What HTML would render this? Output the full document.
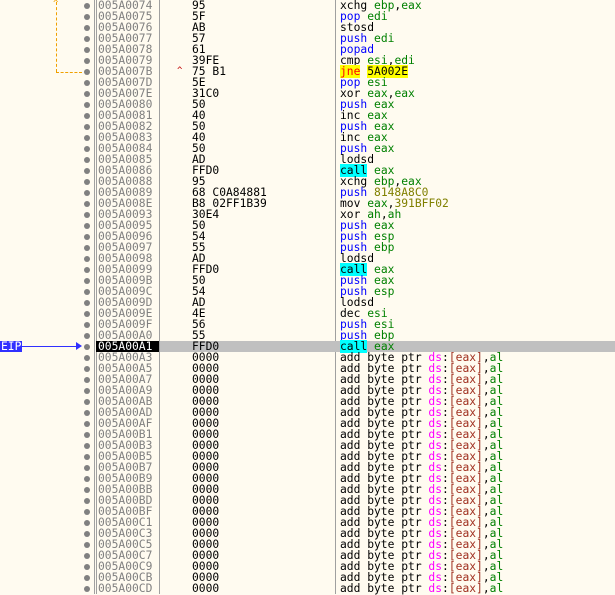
<!DOCTYPE html>
<html><head><style>
body{margin:0;width:615px;height:594px;overflow:hidden;background:#fffbf0;font-family:"DejaVu Sans Mono","Liberation Mono",monospace;font-size:11.3px;position:relative}
.r{position:relative;height:11px;line-height:11px;white-space:pre}
.r i{position:absolute;left:84px;top:3px;width:6px;height:6px;border-radius:50%;background:#808080}
.a{position:absolute;left:98px;color:#808080}
.b{position:absolute;left:192px;color:#000}
.d{position:absolute;left:340px;color:#000}
.p{color:#0000ff}.g{color:#008000}.o{color:#808000}.k{color:#ff00ff}.x{color:#a03020}
.c{background:#00ffff}
.e{background:#ffff00;color:#ff0000}.y{background:#ffff00}
.v{position:absolute;top:0;height:594px;width:1px;background:#a0a0a0}
</style></head><body>
<div class="v" style="left:94px"></div><div class="v" style="left:96px"></div><div class="v" style="left:159px"></div><div class="v" style="left:335px"></div>
<div style="position:absolute;left:56px;top:2px;height:70px;border-left:1px dashed #f0a000"></div>
<div style="position:absolute;left:56px;top:72px;width:26px;border-top:1px dashed #f0a000"></div>
<div style="position:absolute;left:53px;top:0;color:#f0a000;font-size:9px;line-height:8px">^</div>
<div class="r"><i></i><span class="a">005A0074</span><span class="b">95</span><span class="d">xchg <span class="g">ebp</span>,<span class="g">eax</span></span></div>
<div class="r"><i></i><span class="a">005A0075</span><span class="b">5F</span><span class="d"><span class="p">pop</span> <span class="g">edi</span></span></div>
<div class="r"><i></i><span class="a">005A0076</span><span class="b">AB</span><span class="d">stosd</span></div>
<div class="r"><i></i><span class="a">005A0077</span><span class="b">57</span><span class="d"><span class="p">push</span> <span class="g">edi</span></span></div>
<div class="r"><i></i><span class="a">005A0078</span><span class="b">61</span><span class="d"><span class="p">popad</span></span></div>
<div class="r"><i></i><span class="a">005A0079</span><span class="b">39FE</span><span class="d">cmp <span class="g">esi</span>,<span class="g">edi</span></span></div>
<div class="r"><i></i><span class="a">005A007B</span><span style="position:absolute;left:177px;color:#c00000;font-size:9px">^</span><span class="b">75 B1</span><span class="d"><span class="e">jne</span> <span class="y">5A002E</span></span></div>
<div class="r"><i></i><span class="a">005A007D</span><span class="b">5E</span><span class="d"><span class="p">pop</span> <span class="g">esi</span></span></div>
<div class="r"><i></i><span class="a">005A007E</span><span class="b">31C0</span><span class="d">xor <span class="g">eax</span>,<span class="g">eax</span></span></div>
<div class="r"><i></i><span class="a">005A0080</span><span class="b">50</span><span class="d"><span class="p">push</span> <span class="g">eax</span></span></div>
<div class="r"><i></i><span class="a">005A0081</span><span class="b">40</span><span class="d">inc <span class="g">eax</span></span></div>
<div class="r"><i></i><span class="a">005A0082</span><span class="b">50</span><span class="d"><span class="p">push</span> <span class="g">eax</span></span></div>
<div class="r"><i></i><span class="a">005A0083</span><span class="b">40</span><span class="d">inc <span class="g">eax</span></span></div>
<div class="r"><i></i><span class="a">005A0084</span><span class="b">50</span><span class="d"><span class="p">push</span> <span class="g">eax</span></span></div>
<div class="r"><i></i><span class="a">005A0085</span><span class="b">AD</span><span class="d">lodsd</span></div>
<div class="r"><i></i><span class="a">005A0086</span><span class="b">FFD0</span><span class="d"><span class="c">call</span> <span class="g">eax</span></span></div>
<div class="r"><i></i><span class="a">005A0088</span><span class="b">95</span><span class="d">xchg <span class="g">ebp</span>,<span class="g">eax</span></span></div>
<div class="r"><i></i><span class="a">005A0089</span><span class="b">68 C0A84881</span><span class="d"><span class="p">push</span> <span class="o">8148A8C0</span></span></div>
<div class="r"><i></i><span class="a">005A008E</span><span class="b">B8 02FF1B39</span><span class="d">mov <span class="g">eax</span>,<span class="o">391BFF02</span></span></div>
<div class="r"><i></i><span class="a">005A0093</span><span class="b">30E4</span><span class="d">xor <span class="g">ah</span>,<span class="g">ah</span></span></div>
<div class="r"><i></i><span class="a">005A0095</span><span class="b">50</span><span class="d"><span class="p">push</span> <span class="g">eax</span></span></div>
<div class="r"><i></i><span class="a">005A0096</span><span class="b">54</span><span class="d"><span class="p">push</span> <span class="g">esp</span></span></div>
<div class="r"><i></i><span class="a">005A0097</span><span class="b">55</span><span class="d"><span class="p">push</span> <span class="g">ebp</span></span></div>
<div class="r"><i></i><span class="a">005A0098</span><span class="b">AD</span><span class="d">lodsd</span></div>
<div class="r"><i></i><span class="a">005A0099</span><span class="b">FFD0</span><span class="d"><span class="c">call</span> <span class="g">eax</span></span></div>
<div class="r"><i></i><span class="a">005A009B</span><span class="b">50</span><span class="d"><span class="p">push</span> <span class="g">eax</span></span></div>
<div class="r"><i></i><span class="a">005A009C</span><span class="b">54</span><span class="d"><span class="p">push</span> <span class="g">esp</span></span></div>
<div class="r"><i></i><span class="a">005A009D</span><span class="b">AD</span><span class="d">lodsd</span></div>
<div class="r"><i></i><span class="a">005A009E</span><span class="b">4E</span><span class="d">dec <span class="g">esi</span></span></div>
<div class="r"><i></i><span class="a">005A009F</span><span class="b">56</span><span class="d"><span class="p">push</span> <span class="g">esi</span></span></div>
<div class="r"><i></i><span class="a">005A00A0</span><span class="b">55</span><span class="d"><span class="p">push</span> <span class="g">ebp</span></span></div>
<div class="r"><div style="position:absolute;left:160px;right:0;top:0;height:11px;background:#c0c0c0"></div><div style="position:absolute;left:0;top:0;height:11px;background:#3030ff;color:#fff;padding:0 1px">EIP</div><div style="position:absolute;left:22px;top:5px;width:58px;height:1px;background:#3030ff"></div><div style="position:absolute;left:76px;top:1px;width:0;height:0;border-left:6px solid #3030ff;border-top:4px solid transparent;border-bottom:4px solid transparent"></div><i></i><span class="a" style="background:#000;color:#fff;left:96px;padding-left:2px;width:61px">005A00A1</span><span class="b">FFD0</span><span class="d"><span class="c">call</span> <span class="g">eax</span></span></div>
<div class="r"><i></i><span class="a">005A00A3</span><span class="b">0000</span><span class="d">add byte ptr <span class="k">ds</span>:<span class="x">[eax]</span>,<span class="g">al</span></span></div>
<div class="r"><i></i><span class="a">005A00A5</span><span class="b">0000</span><span class="d">add byte ptr <span class="k">ds</span>:<span class="x">[eax]</span>,<span class="g">al</span></span></div>
<div class="r"><i></i><span class="a">005A00A7</span><span class="b">0000</span><span class="d">add byte ptr <span class="k">ds</span>:<span class="x">[eax]</span>,<span class="g">al</span></span></div>
<div class="r"><i></i><span class="a">005A00A9</span><span class="b">0000</span><span class="d">add byte ptr <span class="k">ds</span>:<span class="x">[eax]</span>,<span class="g">al</span></span></div>
<div class="r"><i></i><span class="a">005A00AB</span><span class="b">0000</span><span class="d">add byte ptr <span class="k">ds</span>:<span class="x">[eax]</span>,<span class="g">al</span></span></div>
<div class="r"><i></i><span class="a">005A00AD</span><span class="b">0000</span><span class="d">add byte ptr <span class="k">ds</span>:<span class="x">[eax]</span>,<span class="g">al</span></span></div>
<div class="r"><i></i><span class="a">005A00AF</span><span class="b">0000</span><span class="d">add byte ptr <span class="k">ds</span>:<span class="x">[eax]</span>,<span class="g">al</span></span></div>
<div class="r"><i></i><span class="a">005A00B1</span><span class="b">0000</span><span class="d">add byte ptr <span class="k">ds</span>:<span class="x">[eax]</span>,<span class="g">al</span></span></div>
<div class="r"><i></i><span class="a">005A00B3</span><span class="b">0000</span><span class="d">add byte ptr <span class="k">ds</span>:<span class="x">[eax]</span>,<span class="g">al</span></span></div>
<div class="r"><i></i><span class="a">005A00B5</span><span class="b">0000</span><span class="d">add byte ptr <span class="k">ds</span>:<span class="x">[eax]</span>,<span class="g">al</span></span></div>
<div class="r"><i></i><span class="a">005A00B7</span><span class="b">0000</span><span class="d">add byte ptr <span class="k">ds</span>:<span class="x">[eax]</span>,<span class="g">al</span></span></div>
<div class="r"><i></i><span class="a">005A00B9</span><span class="b">0000</span><span class="d">add byte ptr <span class="k">ds</span>:<span class="x">[eax]</span>,<span class="g">al</span></span></div>
<div class="r"><i></i><span class="a">005A00BB</span><span class="b">0000</span><span class="d">add byte ptr <span class="k">ds</span>:<span class="x">[eax]</span>,<span class="g">al</span></span></div>
<div class="r"><i></i><span class="a">005A00BD</span><span class="b">0000</span><span class="d">add byte ptr <span class="k">ds</span>:<span class="x">[eax]</span>,<span class="g">al</span></span></div>
<div class="r"><i></i><span class="a">005A00BF</span><span class="b">0000</span><span class="d">add byte ptr <span class="k">ds</span>:<span class="x">[eax]</span>,<span class="g">al</span></span></div>
<div class="r"><i></i><span class="a">005A00C1</span><span class="b">0000</span><span class="d">add byte ptr <span class="k">ds</span>:<span class="x">[eax]</span>,<span class="g">al</span></span></div>
<div class="r"><i></i><span class="a">005A00C3</span><span class="b">0000</span><span class="d">add byte ptr <span class="k">ds</span>:<span class="x">[eax]</span>,<span class="g">al</span></span></div>
<div class="r"><i></i><span class="a">005A00C5</span><span class="b">0000</span><span class="d">add byte ptr <span class="k">ds</span>:<span class="x">[eax]</span>,<span class="g">al</span></span></div>
<div class="r"><i></i><span class="a">005A00C7</span><span class="b">0000</span><span class="d">add byte ptr <span class="k">ds</span>:<span class="x">[eax]</span>,<span class="g">al</span></span></div>
<div class="r"><i></i><span class="a">005A00C9</span><span class="b">0000</span><span class="d">add byte ptr <span class="k">ds</span>:<span class="x">[eax]</span>,<span class="g">al</span></span></div>
<div class="r"><i></i><span class="a">005A00CB</span><span class="b">0000</span><span class="d">add byte ptr <span class="k">ds</span>:<span class="x">[eax]</span>,<span class="g">al</span></span></div>
<div class="r"><i></i><span class="a">005A00CD</span><span class="b">0000</span><span class="d">add byte ptr <span class="k">ds</span>:<span class="x">[eax]</span>,<span class="g">al</span></span></div>
</body></html>
